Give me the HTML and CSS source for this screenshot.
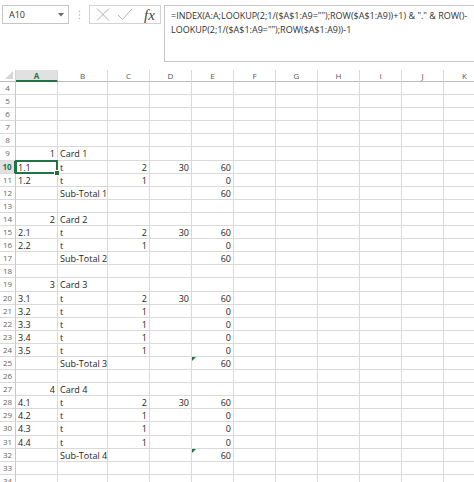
FILE: index.html
```html
<!DOCTYPE html>
<html>
<head>
<meta charset="utf-8">
<link rel="stylesheet" href="styles.css">
</head>
<body>
<div class="app">
  <div class="toolbar">
    <div class="namebox">
      <span class="nb-text">A10</span>
      <svg class="nb-arrow" width="6" height="4" viewBox="0 0 6 4"><path d="M0 0 H6 L3 3.5 Z" fill="#666"/></svg>
    </div>
    <svg class="grip" width="3" height="10" viewBox="0 0 3 10"><circle cx="1.5" cy="1.5" r="0.8" fill="#bbb"/><circle cx="1.5" cy="5" r="0.8" fill="#bbb"/><circle cx="1.5" cy="8.5" r="0.8" fill="#bbb"/></svg>
    <div class="fbtns">
      <svg class="ico" width="14" height="13" viewBox="0 0 14 13"><path d="M1 0.5 L13 12.5 M13 0.5 L1 12.5" stroke="#b0b0b0" stroke-width="1" fill="none"/></svg>
      <svg class="ico" width="16" height="13" viewBox="0 0 16 13"><path d="M1 7 L5.5 11.5 L15 1" stroke="#b0b0b0" stroke-width="1" fill="none"/></svg>
      <span class="fx">fx</span>
    </div>
    <div class="formula">=INDEX(A:A;LOOKUP(2;1/($A$1:A9="");ROW($A$1:A9))+1) &amp; "." &amp; ROW()-<br>LOOKUP(2;1/($A$1:A9="");ROW($A$1:A9))-1</div>
  </div>
  <div class="sheet">
    <div class="corner"><svg width="8" height="8" viewBox="0 0 8 8"><path d="M8 0 V8 H0 Z" fill="#d6d6d6"/></svg></div><div class="ch sel">A</div><div class="ch">B</div><div class="ch">C</div><div class="ch">D</div><div class="ch">E</div><div class="ch">F</div><div class="ch">G</div><div class="ch">H</div><div class="ch">I</div><div class="ch">J</div><div class="ch">K</div>

    <div class="rh">4</div><div class="c"></div><div class="c"></div><div class="c"></div><div class="c"></div><div class="c"></div><div class="c"></div><div class="c"></div><div class="c"></div><div class="c"></div><div class="c"></div><div class="c"></div>
    <div class="rh">5</div><div class="c"></div><div class="c"></div><div class="c"></div><div class="c"></div><div class="c"></div><div class="c"></div><div class="c"></div><div class="c"></div><div class="c"></div><div class="c"></div><div class="c"></div>
    <div class="rh">6</div><div class="c"></div><div class="c"></div><div class="c"></div><div class="c"></div><div class="c"></div><div class="c"></div><div class="c"></div><div class="c"></div><div class="c"></div><div class="c"></div><div class="c"></div>
    <div class="rh">7</div><div class="c"></div><div class="c"></div><div class="c"></div><div class="c"></div><div class="c"></div><div class="c"></div><div class="c"></div><div class="c"></div><div class="c"></div><div class="c"></div><div class="c"></div>
    <div class="rh">8</div><div class="c"></div><div class="c"></div><div class="c"></div><div class="c"></div><div class="c"></div><div class="c"></div><div class="c"></div><div class="c"></div><div class="c"></div><div class="c"></div><div class="c"></div>
    <div class="rh">9</div><div class="c r">1</div><div class="c">Card 1</div><div class="c"></div><div class="c"></div><div class="c"></div><div class="c"></div><div class="c"></div><div class="c"></div><div class="c"></div><div class="c"></div><div class="c"></div>
    <div class="rh rsel">10</div><div class="c active">1.1</div><div class="c">t</div><div class="c r">2</div><div class="c r">30</div><div class="c r">60</div><div class="c"></div><div class="c"></div><div class="c"></div><div class="c"></div><div class="c"></div><div class="c"></div>
    <div class="rh">11</div><div class="c">1.2</div><div class="c">t</div><div class="c r">1</div><div class="c"></div><div class="c r">0</div><div class="c"></div><div class="c"></div><div class="c"></div><div class="c"></div><div class="c"></div><div class="c"></div>
    <div class="rh">12</div><div class="c"></div><div class="c">Sub-Total 1</div><div class="c"></div><div class="c"></div><div class="c r">60</div><div class="c"></div><div class="c"></div><div class="c"></div><div class="c"></div><div class="c"></div><div class="c"></div>
    <div class="rh">13</div><div class="c"></div><div class="c"></div><div class="c"></div><div class="c"></div><div class="c"></div><div class="c"></div><div class="c"></div><div class="c"></div><div class="c"></div><div class="c"></div><div class="c"></div>
    <div class="rh">14</div><div class="c r">2</div><div class="c">Card 2</div><div class="c"></div><div class="c"></div><div class="c"></div><div class="c"></div><div class="c"></div><div class="c"></div><div class="c"></div><div class="c"></div><div class="c"></div>
    <div class="rh">15</div><div class="c">2.1</div><div class="c">t</div><div class="c r">2</div><div class="c r">30</div><div class="c r">60</div><div class="c"></div><div class="c"></div><div class="c"></div><div class="c"></div><div class="c"></div><div class="c"></div>
    <div class="rh">16</div><div class="c">2.2</div><div class="c">t</div><div class="c r">1</div><div class="c"></div><div class="c r">0</div><div class="c"></div><div class="c"></div><div class="c"></div><div class="c"></div><div class="c"></div><div class="c"></div>
    <div class="rh">17</div><div class="c"></div><div class="c">Sub-Total 2</div><div class="c"></div><div class="c"></div><div class="c r">60</div><div class="c"></div><div class="c"></div><div class="c"></div><div class="c"></div><div class="c"></div><div class="c"></div>
    <div class="rh">18</div><div class="c"></div><div class="c"></div><div class="c"></div><div class="c"></div><div class="c"></div><div class="c"></div><div class="c"></div><div class="c"></div><div class="c"></div><div class="c"></div><div class="c"></div>
    <div class="rh">19</div><div class="c r">3</div><div class="c">Card 3</div><div class="c"></div><div class="c"></div><div class="c"></div><div class="c"></div><div class="c"></div><div class="c"></div><div class="c"></div><div class="c"></div><div class="c"></div>
    <div class="rh">20</div><div class="c">3.1</div><div class="c">t</div><div class="c r">2</div><div class="c r">30</div><div class="c r">60</div><div class="c"></div><div class="c"></div><div class="c"></div><div class="c"></div><div class="c"></div><div class="c"></div>
    <div class="rh">21</div><div class="c">3.2</div><div class="c">t</div><div class="c r">1</div><div class="c"></div><div class="c r">0</div><div class="c"></div><div class="c"></div><div class="c"></div><div class="c"></div><div class="c"></div><div class="c"></div>
    <div class="rh">22</div><div class="c">3.3</div><div class="c">t</div><div class="c r">1</div><div class="c"></div><div class="c r">0</div><div class="c"></div><div class="c"></div><div class="c"></div><div class="c"></div><div class="c"></div><div class="c"></div>
    <div class="rh">23</div><div class="c">3.4</div><div class="c">t</div><div class="c r">1</div><div class="c"></div><div class="c r">0</div><div class="c"></div><div class="c"></div><div class="c"></div><div class="c"></div><div class="c"></div><div class="c"></div>
    <div class="rh">24</div><div class="c">3.5</div><div class="c">t</div><div class="c r">1</div><div class="c"></div><div class="c r">0</div><div class="c"></div><div class="c"></div><div class="c"></div><div class="c"></div><div class="c"></div><div class="c"></div>
    <div class="rh">25</div><div class="c"></div><div class="c">Sub-Total 3</div><div class="c"></div><div class="c"></div><div class="c r warn">60</div><div class="c"></div><div class="c"></div><div class="c"></div><div class="c"></div><div class="c"></div><div class="c"></div>
    <div class="rh">26</div><div class="c"></div><div class="c"></div><div class="c"></div><div class="c"></div><div class="c"></div><div class="c"></div><div class="c"></div><div class="c"></div><div class="c"></div><div class="c"></div><div class="c"></div>
    <div class="rh">27</div><div class="c r">4</div><div class="c">Card 4</div><div class="c"></div><div class="c"></div><div class="c"></div><div class="c"></div><div class="c"></div><div class="c"></div><div class="c"></div><div class="c"></div><div class="c"></div>
    <div class="rh">28</div><div class="c">4.1</div><div class="c">t</div><div class="c r">2</div><div class="c r">30</div><div class="c r">60</div><div class="c"></div><div class="c"></div><div class="c"></div><div class="c"></div><div class="c"></div><div class="c"></div>
    <div class="rh">29</div><div class="c">4.2</div><div class="c">t</div><div class="c r">1</div><div class="c"></div><div class="c r">0</div><div class="c"></div><div class="c"></div><div class="c"></div><div class="c"></div><div class="c"></div><div class="c"></div>
    <div class="rh">30</div><div class="c">4.3</div><div class="c">t</div><div class="c r">1</div><div class="c"></div><div class="c r">0</div><div class="c"></div><div class="c"></div><div class="c"></div><div class="c"></div><div class="c"></div><div class="c"></div>
    <div class="rh">31</div><div class="c">4.4</div><div class="c">t</div><div class="c r">1</div><div class="c"></div><div class="c r">0</div><div class="c"></div><div class="c"></div><div class="c"></div><div class="c"></div><div class="c"></div><div class="c"></div>
    <div class="rh">32</div><div class="c"></div><div class="c">Sub-Total 4</div><div class="c"></div><div class="c"></div><div class="c r warn">60</div><div class="c"></div><div class="c"></div><div class="c"></div><div class="c"></div><div class="c"></div><div class="c"></div>
    <div class="rh">33</div><div class="c"></div><div class="c"></div><div class="c"></div><div class="c"></div><div class="c"></div><div class="c"></div><div class="c"></div><div class="c"></div><div class="c"></div><div class="c"></div><div class="c"></div>
    <div class="rh">34</div><div class="c"></div><div class="c"></div><div class="c"></div><div class="c"></div><div class="c"></div><div class="c"></div><div class="c"></div><div class="c"></div><div class="c"></div><div class="c"></div><div class="c"></div>
  </div>
</div>
</body>
</html>
```

FILE: styles.css
```css
html, body {
  margin: 0;
  padding: 0;
  background: #fff;
}
.app {
  width: 474px;
  height: 482px;
  overflow: hidden;
  font-family: "Open Sans", "Liberation Sans", sans-serif;
  color: #222;
}
.toolbar {
  display: flex;
  align-items: flex-start;
  height: 70px;
  padding: 5px 0 0 2px;
  box-sizing: border-box;
}
.toolbar > * { flex: none; }
.namebox {
  width: 67px;
  height: 19px;
  border: 1px solid #c6c6c6;
  box-sizing: border-box;
  display: flex;
  align-items: center;
  justify-content: space-between;
  padding: 0 4px 0 6px;
  font-size: 9px;
  color: #333;
}
.grip {
  margin: 5px 8px 0 9px;
}
.fbtns {
  width: 72px;
  height: 19px;
  border: 1px solid #d2d2d2;
  box-sizing: border-box;
  display: flex;
  align-items: center;
  padding: 0 0 0 6px;
  gap: 7px;
}
.fx {
  font-family: "Liberation Serif", "DejaVu Serif", serif;
  font-style: italic;
  font-size: 15px;
  color: #444;
  margin-left: 4px;
  line-height: 14px;
}
.formula {
  margin-left: 3px;
  width: 330px;
  height: 57px;
  border: 1px solid #c6c6c6;
  border-right: none;
  box-sizing: border-box;
  padding: 3px 0 0 6px;
  font-size: 9px;
  line-height: 14px;
  color: #333;
  white-space: nowrap;
}
.sheet {
  display: grid;
  grid-template-columns: 16px 42px 50px repeat(9, 42px);
  grid-template-rows: 12px;
  grid-auto-rows: 13.1px;
  width: 536px;
}
.corner {
  border-right: 1px solid #d4d4d4;
  border-bottom: 1px solid #bcbcbc;
  box-sizing: border-box;
  display: flex;
  align-items: flex-end;
  justify-content: flex-end;
  padding: 0 2px 2px 0;
}
.corner svg { display: block; }
.ch {
  border-right: 1px solid #dadada;
  border-bottom: 1px solid #bcbcbc;
  box-sizing: border-box;
  font-size: 8px;
  line-height: 11px;
  text-align: center;
  color: #555;
}
.ch.sel {
  background: #e1e1e1;
  color: #217346;
  font-weight: 700;
  border-bottom: 2px solid #217346;
}
.rh {
  border-right: 1px solid #c8c8c8;
  border-bottom: 1px solid #dadada;
  box-sizing: border-box;
  font-size: 8px;
  line-height: 12px;
  text-align: center;
  color: #666;
}
.rh.rsel {
  background: #e1e1e1;
  color: #217346;
  font-weight: 700;
  border-right: 2px solid #217346;
}
.c {
  border-right: 1px solid #dadada;
  border-bottom: 1px solid #dadada;
  box-sizing: border-box;
  font-size: 9px;
  line-height: 13px;
  padding: 0 2px;
  white-space: nowrap;
  color: #1e1e1e;
  position: relative;
}
.c.r { text-align: right; }
.c.active::after {
  content: "";
  position: absolute;
  left: -1px;
  top: -1px;
  right: -1px;
  bottom: -1px;
  border: 2px solid #217346;
  pointer-events: none;
}
.c.active::before {
  content: "";
  position: absolute;
  right: -3px;
  bottom: -3px;
  width: 4px;
  height: 4px;
  background: #217346;
  border: 1px solid #fff;
  z-index: 2;
}
.c.warn::before {
  content: "";
  position: absolute;
  left: 0;
  top: 0;
  border-top: 4px solid #1e7145;
  border-right: 4px solid transparent;
}
```
